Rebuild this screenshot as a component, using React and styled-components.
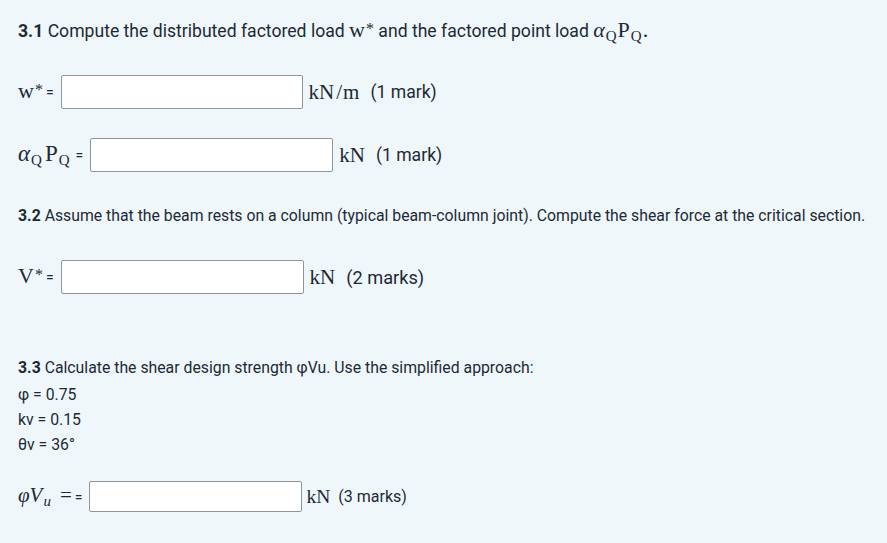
import React from "react";
import styled, { createGlobalStyle } from "styled-components";

const Global = createGlobalStyle`
  html, body {
    margin: 0;
    background: #eff7fb;
  }
  body {
    font-family: Roboto, "Liberation Sans", sans-serif;
    color: #1d2a35;
  }
`;

const Page = styled.div`
  width: 887px;
  height: 543px;
  box-sizing: border-box;
  padding: 19px 0 0 18px;
  background: #eff7fb;
  display: flex;
  flex-direction: column;
`;

const Heading = styled.p`
  margin: 0;
  height: 24px;
  font-size: ${(p) => p.$size || 15.8}px;
  line-height: 24px;
  margin-top: ${(p) => p.$top || 0}px;
  white-space: nowrap;
  b {
    font-weight: 700;
  }
`;

const Row = styled.div`
  display: flex;
  align-items: center;
  height: ${(p) => p.$h || 34}px;
  margin-top: ${(p) => p.$top || 0}px;
`;

const Label = styled.span`
  white-space: nowrap;
  line-height: 24px;
`;

const Math = styled.span`
  font-family: "Liberation Serif", "Times New Roman", serif;
  font-size: ${(p) => p.$size || 21}px;
  line-height: 1;
  font-style: ${(p) => (p.$italic ? "italic" : "normal")};
`;

const Sub = styled.sub`
  font-family: "Liberation Serif", serif;
  font-size: 15px;
  font-style: ${(p) => (p.$italic ? "italic" : "normal")};
  vertical-align: -4px;
  line-height: 0;
  margin: 0 ${(p) => p.$gap || 1}px 0 1px;
`;

const Sup = styled.sup`
  font-family: "Liberation Serif", serif;
  font-size: 16px;
  vertical-align: 3px;
  line-height: 0;
  margin-left: 1px;
`;

const Slash = styled.span`
  margin: 0 1px 0 2px;
`;

const Eq = styled.span`
  font-size: 14px;
  margin: 0 7px 0 3px;
`;

const Input = styled.input`
  box-sizing: border-box;
  width: ${(p) => p.$w || 243}px;
  height: ${(p) => p.$h || 34}px;
  border: 1px solid #8f959e;
  border-radius: 2px;
  background: #fff;
  margin: 0;
  padding: 0 8px;
`;

const Unit = styled.span`
  font-family: "Liberation Serif", "Times New Roman", serif;
  font-size: ${(p) => p.$size || 21}px;
  margin-left: ${(p) => p.$gap || 6}px;
  margin-right: ${(p) => (p.$gap ? p.$gap + 4 : 11)}px;
`;

const Marks = styled.span`
  font-size: ${(p) => p.$size || 17.6}px;
`;

const Given = styled.div`
  margin-top: 2px;
  display: flex;
  flex-direction: column;
  font-size: 15.8px;
  line-height: 25px;
`;

export default function App() {
  return (
    <Page>
      <Global />
      <Heading $size={17.6}>
        <b>3.1</b> Compute the distributed factored load{" "}
        <Math $size={22}>
          w<Sup>*</Sup>
        </Math>{" "}
        and the factored point load{" "}
        <Math $italic $size={22}>α</Math>
        <Sub>Q</Sub>
        <Math $size={22}>P</Math>
        <Sub>Q</Sub>
        <Math $size={22}>.</Math>
      </Heading>

      <Row $top={32}>
        <Label>
          <Math $size={22}>
            w<Sup>*</Sup>
          </Math>
        </Label>
        <Eq>=</Eq>
        <Input $w={242} />
        <Unit>
          kN<Slash>/</Slash>m
        </Unit>
        <Marks>(1 mark)</Marks>
      </Row>

      <Row $top={29}>
        <Label>
          <Math $italic $size={23}>α</Math>
          <Sub $gap={3}>Q</Sub>
          <Math $size={23}>P</Math>
          <Sub $gap={3}>Q</Sub>
        </Label>
        <Eq>=</Eq>
        <Input />
        <Unit>kN</Unit>
        <Marks>(1 mark)</Marks>
      </Row>

      <Heading $top={32}>
        <b>3.2</b> Assume that the beam rests on a column (typical beam-column
        joint). Compute the shear force at the critical section.
      </Heading>

      <Row $top={32}>
        <Label>
          <Math $size={22}>
            V<Sup>*</Sup>
          </Math>
        </Label>
        <Eq>=</Eq>
        <Input />
        <Unit>kN</Unit>
        <Marks $size={18.2}>(2 marks)</Marks>
      </Row>

      <Heading $top={62}>
        <b>3.3</b> Calculate the shear design strength φVu. Use the simplified
        approach:
      </Heading>
      <Given>
        <span>φ = 0.75</span>
        <span>kv = 0.15</span>
        <span>θv = 36°</span>
      </Given>

      <Row $top={24} $h={31}>
        <Label>
          <Math $italic>φV</Math>
          <Sub $italic>u</Sub>
          <Math style={{ marginLeft: 8 }}>=</Math>
        </Label>
        <Eq>=</Eq>
        <Input $w={213} $h={31} />
        <Unit $size={19.5} $gap={4}>kN</Unit>
        <Marks $size={16}>(3 marks)</Marks>
      </Row>
    </Page>
  );
}
